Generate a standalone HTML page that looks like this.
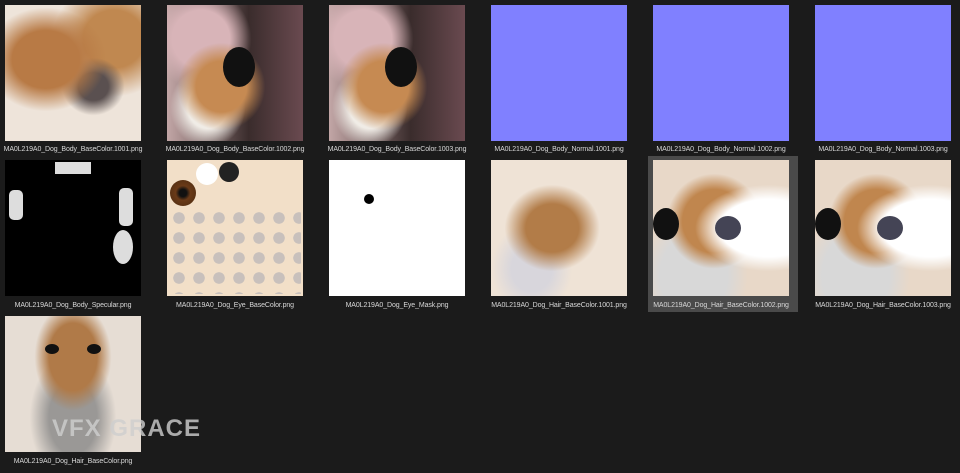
<!DOCTYPE html>
<html><head><meta charset="utf-8"><style>
body{margin:0;width:960px;height:473px;background:#1b1b1b;overflow:hidden;font-family:"Liberation Sans",sans-serif;position:relative}
.t{position:absolute;width:136px;height:136px;overflow:hidden}
.l{position:absolute;width:162px;text-align:center;color:#d8d8d8;font-size:7px;letter-spacing:-0.1px;white-space:nowrap}
.n{background:#8080ff}
.sel{position:absolute;left:648px;top:156px;width:150px;height:156px;background:#4a4a4a}
.b{position:absolute;border-radius:50%}
</style></head><body>
<div class="sel"></div>
<div class="t" style="left:5px;top:5px;background:radial-gradient(ellipse at 30% 40%,#b87a45 0 25%,transparent 45%),radial-gradient(ellipse at 65% 60%,#5a5050 0 12%,transparent 25%),radial-gradient(ellipse at 80% 25%,#c08850 0 20%,transparent 40%),#eee4da"></div>
<div class="t" style="left:167px;top:5px;background:radial-gradient(ellipse at 40% 60%,#c68a52 0 22%,transparent 38%),radial-gradient(ellipse at 30% 75%,#f0ece6 0 15%,transparent 28%),radial-gradient(ellipse at 25% 25%,#d8b4b8 0 20%,transparent 35%),linear-gradient(90deg,#c2a6a6,#3a2c2c 60%,#6a4a50)"><div class="b" style="left:56px;top:42px;width:32px;height:40px;background:#111"></div></div>
<div class="t" style="left:329px;top:5px;background:radial-gradient(ellipse at 40% 60%,#c68a52 0 22%,transparent 38%),radial-gradient(ellipse at 30% 75%,#f0ece6 0 15%,transparent 28%),radial-gradient(ellipse at 25% 25%,#d8b4b8 0 20%,transparent 35%),linear-gradient(90deg,#c2a6a6,#3a2c2c 60%,#6a4a50)"><div class="b" style="left:56px;top:42px;width:32px;height:40px;background:#111"></div></div>
<div class="t n" style="left:491px;top:5px"></div>
<div class="t n" style="left:653px;top:5px"></div>
<div class="t n" style="left:815px;top:5px"></div>
<div class="l" style="left:-8px;top:146px">MA0L219A0_Dog_Body_BaseColor.1001.png</div>
<div class="l" style="left:154px;top:146px">MA0L219A0_Dog_Body_BaseColor.1002.png</div>
<div class="l" style="left:316px;top:146px">MA0L219A0_Dog_Body_BaseColor.1003.png</div>
<div class="l" style="left:478px;top:146px">MA0L219A0_Dog_Body_Normal.1001.png</div>
<div class="l" style="left:640px;top:146px">MA0L219A0_Dog_Body_Normal.1002.png</div>
<div class="l" style="left:802px;top:146px">MA0L219A0_Dog_Body_Normal.1003.png</div>
<div class="t" style="left:5px;top:160px;background:#000">
<div style="position:absolute;left:4px;top:30px;width:14px;height:30px;background:#ddd;border-radius:5px"></div>
<div style="position:absolute;left:114px;top:28px;width:14px;height:38px;background:#ddd;border-radius:5px"></div>
<div style="position:absolute;left:108px;top:70px;width:20px;height:34px;background:#ddd;border-radius:50%"></div>
<div style="position:absolute;left:50px;top:2px;width:36px;height:12px;background:#ddd"></div>
</div>
<div class="t" style="left:167px;top:160px;background:#f2dfc8">
<div class="b" style="left:3px;top:20px;width:26px;height:26px;background:radial-gradient(#111 20%,#6a3a18 40%,#4a2a10)"></div>
<div class="b" style="left:29px;top:3px;width:22px;height:22px;background:#fff"></div>
<div class="b" style="left:52px;top:2px;width:20px;height:20px;background:#222"></div>
<div style="position:absolute;left:2px;top:48px;width:132px;height:86px;background:radial-gradient(circle,#c8c0bc 40%,transparent 42%) 0 0/20px 20px"></div>
</div>
<div class="t" style="left:329px;top:160px;background:#fff"><div class="b" style="left:35px;top:34px;width:10px;height:10px;background:#000"></div></div>
<div class="t" style="left:491px;top:160px;background:radial-gradient(ellipse at 45% 50%,#b27c48 0 25%,transparent 45%),radial-gradient(ellipse at 30% 80%,#d8d6dc 0 15%,transparent 30%),#efe3d6"></div>
<div class="t" style="left:653px;top:160px;background:radial-gradient(ellipse at 85% 50%,#fff 0 30%,transparent 45%),radial-gradient(ellipse at 45% 45%,#c0864e 0 30%,transparent 45%),radial-gradient(ellipse at 30% 85%,#d8d8d8 0 25%,transparent 40%),#e8d8c8"><div class="b" style="left:0;top:48px;width:26px;height:32px;background:#111"></div><div class="b" style="left:62px;top:56px;width:26px;height:24px;background:#445"></div></div>
<div class="t" style="left:815px;top:160px;background:radial-gradient(ellipse at 85% 50%,#fff 0 30%,transparent 45%),radial-gradient(ellipse at 45% 45%,#c0864e 0 30%,transparent 45%),radial-gradient(ellipse at 30% 85%,#d8d8d8 0 25%,transparent 40%),#e8d8c8"><div class="b" style="left:0;top:48px;width:26px;height:32px;background:#111"></div><div class="b" style="left:62px;top:56px;width:26px;height:24px;background:#445"></div></div>
<div class="l" style="left:-8px;top:302px">MA0L219A0_Dog_Body_Specular.png</div>
<div class="l" style="left:154px;top:302px">MA0L219A0_Dog_Eye_BaseColor.png</div>
<div class="l" style="left:316px;top:302px">MA0L219A0_Dog_Eye_Mask.png</div>
<div class="l" style="left:478px;top:302px">MA0L219A0_Dog_Hair_BaseColor.1001.png</div>
<div class="l" style="left:640px;top:302px">MA0L219A0_Dog_Hair_BaseColor.1002.png</div>
<div class="l" style="left:802px;top:302px">MA0L219A0_Dog_Hair_BaseColor.1003.png</div>
<div class="t" style="left:5px;top:316px;background:radial-gradient(ellipse at 50% 30%,#b07a48 0 25%,transparent 40%),radial-gradient(ellipse at 50% 75%,#9a9896 0 25%,transparent 45%),#e6ddd4"><div class="b" style="left:40px;top:28px;width:14px;height:10px;background:#111"></div><div class="b" style="left:82px;top:28px;width:14px;height:10px;background:#111"></div></div>
<div style="position:absolute;left:52px;top:415px;color:#cfcfcf;font-weight:bold;font-size:24px;opacity:.8;letter-spacing:1px">VFX GRACE</div>
<div class="l" style="left:-8px;top:458px">MA0L219A0_Dog_Hair_BaseColor.png</div>
</body></html>
